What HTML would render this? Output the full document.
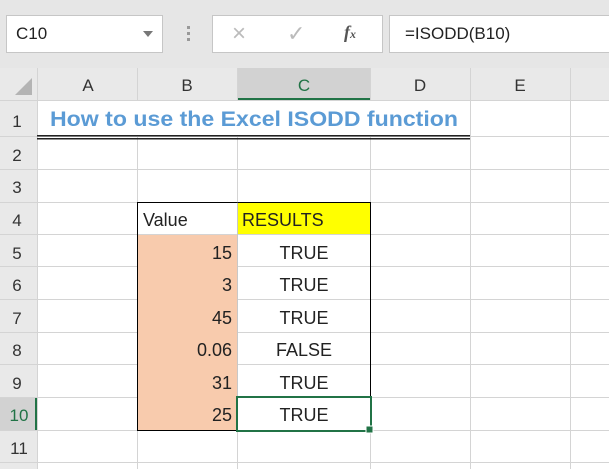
<!DOCTYPE html><html><head><style>
body{margin:0;width:609px;height:469px;overflow:hidden;background:#fff;font-family:"Liberation Sans",sans-serif;position:relative}
.a{position:absolute;box-sizing:border-box}
.t{font-size:18px;color:#222}
</style></head><body>
<div class="a" style="left:0;top:0;width:609px;height:68px;background:#e6e6e6"></div>
<div class="a" style="left:6px;top:15px;width:157px;height:38px;background:#fff;border:1px solid #c6c6c6"></div>
<div class="a t" style="left:16px;top:24px;font-size:17px">C10</div>
<div class="a" style="left:143px;top:31px;width:0;height:0;border-left:5px solid transparent;border-right:5px solid transparent;border-top:6px solid #777"></div>
<div class="a" style="left:187px;top:26px;width:3px;height:3px;background:#999;box-shadow:0 6px #999,0 12px #999"></div>
<div class="a" style="left:212px;top:15px;width:171px;height:38px;background:#fff;border:1px solid #c6c6c6"></div>
<div class="a" style="left:232px;top:20px;font-size:24px;color:#bbb">×</div>
<div class="a" style="left:287px;top:21px;font-size:22px;color:#bbb">✓</div>
<div class="a" style="left:344px;top:22px;font-size:18px;color:#555;font-style:italic;font-family:'Liberation Serif',serif;font-weight:bold">f<span style="font-size:12px">x</span></div>
<div class="a" style="left:389px;top:15px;width:230px;height:38px;background:#fff;border:1px solid #c6c6c6"></div>
<div class="a t" style="left:405px;top:24px;font-size:17px">=ISODD(B10)</div>
<svg class="a" style="left:0;top:68px" width="609" height="401">
<rect x="0" y="0" width="609" height="32" fill="#e9e9e9"/>
<rect x="0" y="32" width="37" height="369" fill="#e9e9e9"/>
<rect x="237" y="0" width="134" height="32" fill="#d2d2d2"/>
<rect x="237" y="30" width="134" height="2" fill="#217346"/>
<rect x="0" y="329" width="37" height="33" fill="#d2d2d2"/>
<rect x="35" y="329" width="2" height="33" fill="#217346"/>
<polygon points="32,10 32,27 15,27" fill="#b4b4b4"/>
<g stroke="#d4d4d4" stroke-width="1">
<line x1="37.5" y1="0" x2="37.5" y2="401"/><line x1="137.5" y1="0" x2="137.5" y2="401"/><line x1="237.5" y1="0" x2="237.5" y2="401"/><line x1="370.5" y1="0" x2="370.5" y2="401"/><line x1="470.5" y1="0" x2="470.5" y2="401"/><line x1="570.5" y1="0" x2="570.5" y2="401"/>
<line x1="0" y1="32.5" x2="609" y2="32.5"/><line x1="0" y1="68.5" x2="609" y2="68.5"/><line x1="0" y1="101.5" x2="609" y2="101.5"/><line x1="0" y1="134.5" x2="609" y2="134.5"/><line x1="0" y1="166.5" x2="609" y2="166.5"/><line x1="0" y1="198.5" x2="609" y2="198.5"/><line x1="0" y1="231.5" x2="609" y2="231.5"/><line x1="0" y1="264.5" x2="609" y2="264.5"/><line x1="0" y1="296.5" x2="609" y2="296.5"/><line x1="0" y1="329.5" x2="609" y2="329.5"/><line x1="0" y1="362.5" x2="609" y2="362.5"/><line x1="0" y1="394.5" x2="609" y2="394.5"/>
</g>
<rect x="38" y="33" width="432" height="35" fill="#fff"/>
<rect x="37" y="67" width="433" height="1.5" fill="#222"/><rect x="37" y="70" width="433" height="1.5" fill="#222"/>
<rect x="138" y="167" width="99" height="195" fill="#f8cbad"/>
<rect x="238" y="135" width="132" height="31" fill="#ffff00"/>
<rect x="137.5" y="134.5" width="233" height="228" fill="none" stroke="#000"/>
<line x1="237.5" y1="134.5" x2="237.5" y2="362" stroke="#bbb" stroke-width="0.5"/>
<rect x="237" y="329" width="134" height="34" fill="#fff" stroke="#217346" stroke-width="2"/>
<rect x="366" y="358" width="7" height="7" fill="#217346" stroke="#fff"/>
<g font-family="Liberation Sans,sans-serif" font-size="17" fill="#333" text-anchor="middle">
<text x="88" y="23">A</text><text x="187" y="23">B</text><text x="304" y="23" fill="#217346">C</text><text x="420" y="23">D</text><text x="520" y="23">E</text>
<text x="17" y="59">1</text><text x="17" y="93">2</text><text x="17" y="125">3</text><text x="17" y="158">4</text><text x="17" y="191">5</text><text x="17" y="223">6</text><text x="17" y="256">7</text><text x="17" y="288">8</text><text x="17" y="321">9</text><text x="19" y="353" fill="#217346">10</text><text x="19" y="386">11</text>
</g>
<text x="50" y="58" font-family="Liberation Sans,sans-serif" font-size="21" font-weight="bold" fill="#5b9bd5" textLength="408" lengthAdjust="spacingAndGlyphs">How to use the Excel ISODD function</text>
<g font-family="Liberation Sans,sans-serif" font-size="18" fill="#222">
<text x="143" y="158">Value</text><text x="242" y="158">RESULTS</text>
<g text-anchor="end"><text x="232" y="191">15</text><text x="232" y="223">3</text><text x="232" y="256">45</text><text x="232" y="288">0.06</text><text x="232" y="321">31</text><text x="232" y="353">25</text></g>
<g text-anchor="middle"><text x="304" y="191">TRUE</text><text x="304" y="223">TRUE</text><text x="304" y="256">TRUE</text><text x="304" y="288">FALSE</text><text x="304" y="321">TRUE</text><text x="304" y="353">TRUE</text></g>
</g>
</svg>
</body></html>
